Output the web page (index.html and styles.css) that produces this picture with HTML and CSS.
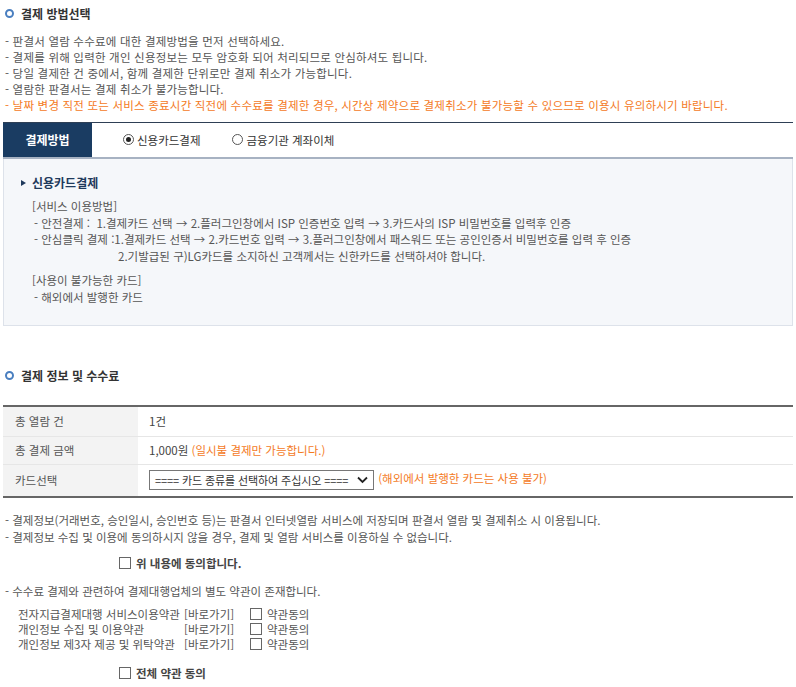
FILE: index.html
```html
<!DOCTYPE html>
<html lang="ko">
<head>
<meta charset="utf-8" />
<title>결제 방법선택</title>
<link rel="stylesheet" href="styles.css">
</head>
<body>
<div class="wrap">

	<h3 class="tit"><span class="dot"></span>결제 방법선택</h3>
	<ul class="notice">
		<li>- 판결서 열람 수수료에 대한 결제방법을 먼저 선택하세요.</li>
		<li>- 결제를 위해 입력한 개인 신용정보는 모두 암호화 되어 처리되므로 안심하셔도 됩니다.</li>
		<li>- 당일 결제한 건 중에서, 함께 결제한 단위로만 결제 취소가 가능합니다.</li>
		<li>- 열람한 판결서는 결제 취소가 불가능합니다.</li>
		<li class="warn">- 날짜 변경 직전 또는 서비스 종료시간 직전에 수수료를 결제한 경우, 시간상 제약으로 결제취소가 불가능할 수 있으므로 이용시 유의하시기 바랍니다.</li>
	</ul>

	<div class="paytab">
		<div class="paytab-th">결제방법</div>
		<div class="paytab-td">
			<label class="radio"><span class="rdo on"></span>신용카드결제</label>
			<label class="radio"><span class="rdo"></span>금융기관 계좌이체</label>
		</div>
	</div>
	<div class="paybox">
		<p class="paybox-tit">신용카드결제</p>
		<p class="sub">[서비스 이용방법]</p>
		<ul class="guide">
			<li>- 안전결제 :&nbsp; 1.결제카드 선택 → 2.플러그인창에서 ISP 인증번호 입력 → 3.카드사의 ISP 비밀번호를 입력후 인증</li>
			<li>- 안심클릭 결제 :1.결제카드 선택 → 2.카드번호 입력 → 3.플러그인창에서 패스워드 또는 공인인증서 비밀번호를 입력 후 인증</li>
			<li class="indent">2.기발급된 구)LG카드를 소지하신 고객께서는 신한카드를 선택하셔야 합니다.</li>
		</ul>
		<p class="sub sub2">[사용이 불가능한 카드]</p>
		<ul class="guide">
			<li>- 해외에서 발행한 카드</li>
		</ul>
	</div>

	<h3 class="tit tit2"><span class="dot"></span>결제 정보 및 수수료</h3>
	<table class="info">
		<tr class="r1">
			<th>총 열람 건</th>
			<td>1건</td>
		</tr>
		<tr class="r2">
			<th>총 결제 금액</th>
			<td>1,000원 <span class="orange">(일시불 결제만 가능합니다.)</span></td>
		</tr>
		<tr class="r3">
			<th>카드선택</th>
			<td>
				<span class="sel"><span class="sel-txt">==== 카드 종류를 선택하여 주십시오 ====</span>
					<svg class="arr" width="11" height="8" viewBox="0 0 11 8"><path d="M1 1.5 L5.5 6 L10 1.5" fill="none" stroke="#222" stroke-width="1.8"/></svg>
				</span>
				<span class="orange">(해외에서 발행한 카드는 사용 불가)</span>
			</td>
		</tr>
	</table>

	<ul class="notice notice2">
		<li>- 결제정보(거래번호, 승인일시, 승인번호 등)는 판결서 인터넷열람 서비스에 저장되며 판결서 열람 및 결제취소 시 이용됩니다.</li>
		<li>- 결제정보 수집 및 이용에 동의하시지 않을 경우, 결제 및 열람 서비스를 이용하실 수 없습니다.</li>
	</ul>
	<p class="agree"><span class="chk"></span>위 내용에 동의합니다.</p>

	<p class="line">- 수수료 결제와 관련하여 결제대행업체의 별도 약관이 존재합니다.</p>
	<ul class="terms">
		<li><span class="t-name">전자지급결제대행 서비스이용약관</span><span class="t-link">[바로가기]</span><span class="chk"></span>약관동의</li>
		<li><span class="t-name">개인정보 수집 및 이용약관</span><span class="t-link">[바로가기]</span><span class="chk"></span>약관동의</li>
		<li><span class="t-name">개인정보 제3자 제공 및 위탁약관</span><span class="t-link">[바로가기]</span><span class="chk"></span>약관동의</li>
	</ul>
	<p class="agree agree2"><span class="chk"></span>전체 약관 동의</p>

</div>
</body>
</html>
```

FILE: styles.css
```css
body,ul,p,h3{margin:0;padding:0;}
body{font-family:"Noto Sans CJK KR","Noto Sans",sans-serif;font-size:11.5px;color:#555;background:#fff;}
ul{list-style:none;}
.wrap{width:790px;padding:0 3px;}

.tit{display:flex;align-items:center;height:26px;font-size:12px;font-weight:bold;color:#333;}
.dot{display:inline-block;width:5px;height:5px;border:2px solid #4a7fc0;border-radius:50%;margin:0 7px 0 2px;}
.tit2{margin-top:37px;}

.notice{padding:8px 0 0 2px;letter-spacing:0.2px;}
.notice li{line-height:15.9px;}
.warn{color:#f47a1e;}

.paytab{display:flex;height:34px;margin-top:8px;border-top:1px solid #2e3f55;border-bottom:2px solid #a7b2c2;}
.paytab-th{width:89px;background:#1a3c62;color:#fff;font-size:12px;font-weight:bold;display:flex;align-items:center;justify-content:center;}
.paytab-td{display:flex;align-items:center;padding-left:31px;gap:32px;color:#333;}
.radio{display:flex;align-items:center;}
.rdo{display:inline-block;width:9px;height:9px;border:1px solid #555;border-radius:50%;margin-right:3px;position:relative;background:#fff;}
.rdo.on::after{content:"";position:absolute;left:2px;top:2px;width:5px;height:5px;border-radius:50%;background:#222;}

.paybox{box-sizing:border-box;height:167px;background:#f5f7fa;border:1px solid #dde2ea;border-top:none;padding:16px 0 0 16px;}
.paybox-tit{font-size:12px;font-weight:bold;color:#1f3a5c;line-height:16px;}
.paybox-tit::before{content:"";display:inline-block;border-left:5px solid #1f3a5c;border-top:3px solid transparent;border-bottom:3px solid transparent;margin:0 6px 2px 1px;vertical-align:middle;}
.sub{margin:7px 0 0 12px;line-height:16px;color:#555;}
.sub2{margin-top:8px;}
.guide{padding:1px 0 0 14px;}
.guide li{line-height:16.5px;}
.guide .indent{padding-left:84px;}

.info{width:790px;margin-top:16px;border-collapse:collapse;border-top:2px solid #666;border-bottom:2px solid #666;}
.info th,.info td{border-bottom:1px solid #e6e6e6;text-align:left;font-weight:normal;padding-top:0;padding-bottom:0;}
.r1 th,.r1 td{height:29px;}
.r2 th,.r2 td{height:27px;}
.r3 th,.r3 td{height:31px;}
.info th{width:122px;background:#f3f3f3;padding-left:12px;color:#555;}
.info td{padding-left:11px;color:#444;}
.orange{color:#f47a1e;}
.sel{display:inline-flex;align-items:center;box-sizing:border-box;width:225px;height:20px;border:1px solid #777;padding:0 0 0 5px;color:#333;vertical-align:middle;margin-right:1px;white-space:nowrap;}
.sel-txt{font-size:11px;letter-spacing:-0.1px;}
.arr{margin-left:auto;margin-right:5px;flex:none;}

.notice2{padding-top:14px;letter-spacing:0;}
.notice2 li{line-height:17px;}
.agree{display:flex;align-items:center;margin:9px 0 0 116px;font-weight:bold;color:#444;line-height:16px;}
.chk{display:inline-block;width:10px;height:10px;border:1px solid #666;background:#fff;margin-right:5px;}
.line{margin-top:12px;padding-left:2px;line-height:16px;}
.terms{padding:8px 0 0 15px;}
.terms li{display:flex;align-items:center;line-height:15px;}
.t-name{width:166px;}
.t-link{width:66px;}
.agree2{margin-top:13px;}
```
